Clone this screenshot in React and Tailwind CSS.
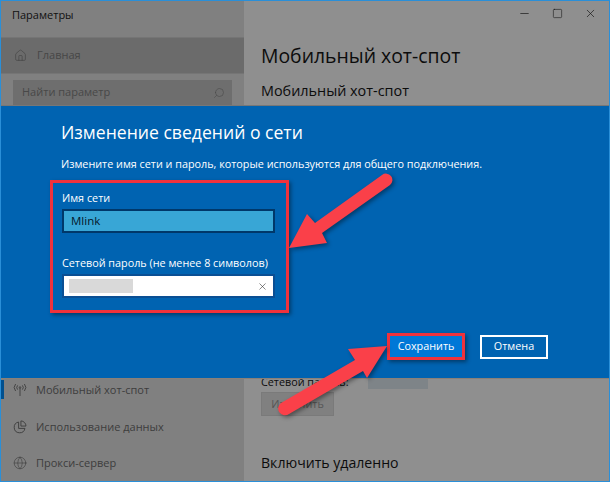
import { Home, Search, Minus, Square, X, Globe } from "lucide-react";

const font = { fontFamily: '"Open Sans", "Noto Sans", sans-serif' };

function NavItem({ icon, label, active }) {
  return (
    <div className="relative flex h-[36.5px] items-start pl-[12px] text-[11px] leading-[16px] text-[#3d3d3d]">
      {active && <div className="absolute -top-[2px] left-0 h-[19px] w-[3px] bg-[#00508f]" />}
      <div className="flex h-[16px] w-[23px] items-center">{icon}</div>
      <span>{label}</span>
    </div>
  );
}

function HotspotIcon() {
  return (
    <svg width="14" height="14" viewBox="0 0 14 14" fill="none" stroke="#3d3d3d" strokeWidth="0.9">
      <path d="M7 5v8" />
      <circle cx="7" cy="4.5" r="0.8" />
      <path d="M4.6 2.4a3.2 3.2 0 0 0 0 4.2M9.4 2.4a3.2 3.2 0 0 1 0 4.2" />
      <path d="M2.6 1a5.4 5.4 0 0 0 0 7M11.4 1a5.4 5.4 0 0 1 0 7" />
    </svg>
  );
}

function DataIcon() {
  return (
    <svg width="14" height="14" viewBox="0 0 15 15" fill="none" stroke="#3d3d3d" strokeWidth="1">
      <path d="M6 2.2a5.8 5.8 0 1 0 6.8 6.8H6z" />
      <path d="M8.5 1a5.5 5.5 0 0 1 5.4 5.5H8.5z" />
    </svg>
  );
}

export default function App() {
  return (
    <div
      className="relative flex h-[482px] w-[610px] flex-col overflow-hidden border border-[#2a8fd8] bg-[#8f8f8f]"
      style={font}
    >
      {/* top part, dimmed */}
      <div className="flex h-[104px] shrink-0">
        <div className="w-[243px] shrink-0 bg-[#808080]">
          <div className="flex h-[36px] items-start pl-[11px] pt-[6px] text-[11px] leading-[16px] text-[#111]">Параметры</div>
          <div className="flex h-[37px] items-center border-y border-[#757575] bg-[#6b6b6b] pl-[13px] text-[11px] text-[#474747]">
            <Home size={13} strokeWidth={1.2} className="mr-[10px] text-[#444]" />
            <span>Главная</span>
          </div>
          <div className="ml-[12px] mt-[6px] flex h-[25px] w-[219px] items-center justify-between bg-[#6e6e6e] pl-[9px] pr-[7px] text-[11px] text-[#484848]">
            <span>Найти параметр</span>
            <Search size={12} strokeWidth={1.2} className="-scale-x-100 text-[#4a4a4a]" />
          </div>
        </div>
        <div className="flex-1 pl-[17px]">
          <div className="flex h-[27px] items-start justify-end gap-[21px] pr-[12px] pt-[6px] text-[#111]">
            <Minus size={13} strokeWidth={1.2} />
            <Square size={11} strokeWidth={1.2} className="mt-[1px]" />
            <X size={13} strokeWidth={1.2} />
          </div>
          <div className="mt-[14px] text-[19.4px] leading-[28px] text-[#0c0c0c]">Мобильный хот-спот</div>
          <div className="mt-[11px] text-[14.4px] font-medium leading-[20px] text-[#0c0c0c]">Мобильный хот-спот</div>
        </div>
      </div>

      {/* dialog */}
      <div className="h-[273px] shrink-0 border-t border-[#777] bg-[#0063b1] pl-[60px] pr-[61px] text-white">
        <div className="mt-[13px] text-[17.6px] leading-[27px]">Изменение сведений о сети</div>
        <div className="mt-[10px] whitespace-nowrap text-[10.8px] leading-[16px]">
          Измените имя сети и пароль, которые используются для общего подключения.
        </div>
        <div className="-ml-[11px] mt-[8px] h-[133px] w-[239px] border-[3px] border-[#f0323c] pl-[9px] pt-[7px] shadow-[2px_2px_4px_rgba(0,0,0,0.4)]">
          <div className="text-[10.8px] leading-[16px]">Имя сети</div>
          <div className="mt-[3px] flex h-[24px] w-[213px] items-center border-2 border-[#00386a] bg-[#38a6d6] pl-[7px] text-[11.5px] font-medium text-[#04182a]">
            Mlink
          </div>
          <div className="mt-[22px] whitespace-nowrap text-[10.8px] leading-[16px]">Сетевой пароль (не менее 8 символов)</div>
          <div className="mt-[3px] flex h-[24px] w-[213px] items-center justify-between border-2 border-[#0a4f94] bg-white pl-[5px] pr-[5px]">
            <div className="h-[14px] w-[64px] bg-[#d9d9d9]" />
            <X size={11} strokeWidth={1.2} className="text-[#222]" />
          </div>
        </div>
        <div className="ml-[326px] mt-[20px] flex items-center gap-[15px]">
          <div className="flex h-[27px] w-[78px] items-center justify-center border-[3px] border-[#f0323c] bg-[#0078d7] text-[10.8px] shadow-[2px_2px_4px_rgba(0,0,0,0.4)]">
            Сохранить
          </div>
          <div className="flex h-[24px] w-[68px] items-center justify-center border-2 border-white bg-[#0063b1] text-[10.8px]">
            Отмена
          </div>
        </div>
      </div>

      {/* bottom part, dimmed */}
      <div className="flex flex-1 overflow-hidden border-t border-[#8a8078]">
        <div className="w-[243px] shrink-0 bg-[#808080] pt-[3px]">
          <NavItem icon={<HotspotIcon />} label="Мобильный хот-спот" active />
          <NavItem icon={<DataIcon />} label="Использование данных" />
          <NavItem icon={<Globe size={14} strokeWidth={1} className="text-[#3d3d3d]" />} label="Прокси-сервер" />
        </div>
        <div className="flex-1 pl-[17px]">
          <div className="-mt-[4px] flex h-[14px] items-center text-[10.8px] text-[#0c0c0c]">
            <span className="w-[107px]">Сетевой пароль:</span>
            <div className="h-[14px] w-[60px] bg-[#7e8488]" />
          </div>
          <div className="mt-[3px] flex h-[24px] w-[73px] items-center justify-center border border-[#7a7a7a] bg-[#808080] text-[10.8px] text-[#555]">
            Изменить
          </div>
          <div className="mt-[37px] text-[14.1px] font-medium leading-[20px] text-[#0c0c0c]">Включить удаленно</div>
        </div>
      </div>

      {/* annotation arrows */}
      <svg className="pointer-events-none absolute -left-[1px] -top-[1px]" width="610" height="482" fill="#fa4049">
        <g className="drop-shadow-[2px_2px_2px_rgba(0,0,0,0.4)]">
          <path d="M289 248 L307 214 L315 223 L382 175 A6.3 6.3 0 0 1 390 185 L322 233 L327 243 Z" />
          <path d="M387 346 L348 349 L355 360 L281 403 A6.3 6.3 0 0 0 289 414 L363 371 L367 378 Z" />
        </g>
      </svg>
    </div>
  );
}
